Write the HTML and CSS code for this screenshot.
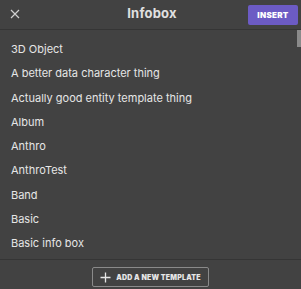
FILE: index.html
```html
<!DOCTYPE html>
<html>
<head><meta charset="utf-8"><link rel="stylesheet" href="styles.css"></head>
<body>
<div class="dialog">
  <header class="head">
    <button class="close" aria-label="Close">
      <svg width="10" height="10" viewBox="0 0 10 10"><path d="M1 1L9 9M9 1L1 9" stroke="#d0d0d0" stroke-width="1.2" fill="none"/></svg>
    </button>
    <h1 class="title">Infobox</h1>
    <button class="insert">INSERT</button>
  </header>
  <div class="body">
    <ul class="list">
      <li>3D Object</li>
      <li>A better data character thing</li>
      <li>Actually good entity template thing</li>
      <li>Album</li>
      <li>Anthro</li>
      <li>AnthroTest</li>
      <li>Band</li>
      <li>Basic</li>
      <li>Basic info box</li>
    </ul>
    <div class="thumb"></div>
  </div>
  <footer class="foot">
    <button class="add">
      <svg width="11" height="11" viewBox="0 0 11 11"><path d="M5.5 0.5V10.5M0.5 5.5H10.5" stroke="#e6e6e6" stroke-width="1.3" fill="none"/></svg>
      <span>ADD A NEW TEMPLATE</span>
    </button>
  </footer>
</div>
</body>
</html>
```
FILE: styles.css
```css
* { box-sizing: border-box; }
html, body { margin: 0; padding: 0; background: #424242; }
body { font-family: Inter, "Noto Sans", sans-serif; color: #e6e6e6; }
.dialog { width: 301px; height: 289px; display: flex; flex-direction: column; background: #424242; }
.head { height: 30px; flex: none; display: flex; align-items: center; padding: 0 3px 3px 10px; border-bottom: 1px solid #353535; }
.close { background: none; border: 0; padding: 0; width: 10px; height: 10px; display: flex; cursor: pointer; margin-top: 1px; }
.title { flex: 1; text-align: center; margin: 0; font-size: 13px; font-weight: 700; color: #e0e0e0; padding-left: 36px; letter-spacing: 0.2px; }
.insert { width: 50px; height: 20px; background: #6c5bc4; border: 0; border-radius: 2px; color: #fff; font-family: Inter, sans-serif; font-weight: 900; font-size: 8px; letter-spacing: 0.3px; padding: 0; margin-top: 3px; }
.body { flex: 1; position: relative; overflow: hidden; }
.list { list-style: none; margin: 0; padding: 7px 0 0 11px; }
.list li { height: 24.3px; line-height: 24px; font-size: 11px; color: #e6e6e6; white-space: nowrap; }
.thumb { position: absolute; top: 0; right: 0; width: 4px; height: 17px; background: #8a8a8a; }
.foot { height: 30px; flex: none; border-top: 1px solid #353535; display: flex; justify-content: center; align-items: center; padding-right: 1px; }
.add { height: 20px; width: 117px; display: flex; align-items: center; justify-content: center; gap: 5px; background: transparent; border: 1px solid #8a8a8a; border-radius: 2px; color: #e6e6e6; font-family: Inter, sans-serif; font-weight: 900; font-size: 7px; letter-spacing: 0.2px; padding: 0; margin-top: 5px; margin-left: 1px; }
```
